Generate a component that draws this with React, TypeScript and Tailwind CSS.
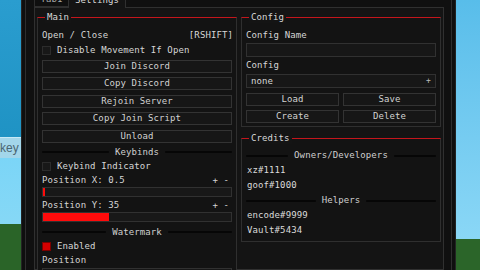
import React from "react";

const RED = "bg-[#c4161c]";

function GroupBox({
  title,
  className,
  children,
}: {
  title: string;
  className?: string;
  children: React.ReactNode;
}) {
  return (
    <div
      className={`relative border border-[#2f2f2f] border-t-[#c4161c] bg-[#131313] px-[4px] ${className ?? ""}`}
    >
      <div className="absolute -top-[7px] left-[7px] bg-[#141414] px-[2px] leading-[12px] text-[#d8d8d8]">
        {title}
      </div>
      {children}
    </div>
  );
}

function Btn({ label, className }: { label: string; className?: string }) {
  return (
    <div
      className={`flex h-[13px] items-center justify-center border border-[#333] bg-[#161616] leading-[11px] text-[#d2d2d2] ${className ?? ""}`}
    >
      {label}
    </div>
  );
}

function Divider({ label, className }: { label: string; className?: string }) {
  return (
    <div className={`flex items-center gap-[6px] ${className ?? ""}`}>
      <div className="h-[2px] flex-1 rounded-full bg-[#060606]" />
      <span className="text-[#cfcfcf]">{label}</span>
      <div className="h-[2px] flex-1 rounded-full bg-[#060606]" />
    </div>
  );
}

function Check({ label, on, className }: { label: string; on?: boolean; className?: string }) {
  return (
    <div className={`flex h-[12px] items-center gap-[6px] ${className ?? ""}`}>
      <div
        className={`h-[9px] w-[9px] border ${on ? "border-[#7a0000] bg-[#d40000]" : "border-[#2c2c2c] bg-[#181818]"}`}
      />
      <span>{label}</span>
    </div>
  );
}

function Slider({ value, max, className }: { value: number; max: number; className?: string }) {
  return (
    <div className={`h-[10px] border border-[#313131] bg-[#181818] ${className ?? ""}`}>
      <div className={`h-full ${value > 0 ? "bg-[#ff0b0b]" : ""}`} style={{ width: `${Math.max(1, (value / max) * 100)}%` }} />
    </div>
  );
}

export default function App() {
  return (
    <div className="relative h-[270px] w-[480px] overflow-hidden bg-[#6fcdf2] font-['DejaVu_Sans_Mono',monospace] text-[9px] tracking-[0.1px] text-[#d6d6d6]">
      {/* game backdrop */}
      <div className="absolute left-0 top-0 h-[137px] w-[22px] bg-gradient-to-b from-[#2a9dcf] to-[#1f93c4]" />
      <div className="absolute left-0 top-[137px] flex h-[21px] w-[22px] items-center border-t border-[#c6e9f6] bg-[#a3d6ea] pl-[0px] font-['Liberation_Sans',sans-serif] text-[12px] text-[#4b6672]">
        key
      </div>
      <div className="absolute left-0 top-[158px] h-[66px] w-[22px] bg-gradient-to-b from-[#7bd5f7] to-[#86d8f6]" />
      <div className="absolute left-0 top-[224px] h-[46px] w-[22px] bg-[#2a6428]" />
      <div className="absolute right-0 top-0 h-[239px] w-[26px] bg-gradient-to-b from-[#58bdea] to-[#8ad7f6]" />
      <div className="absolute right-0 top-[239px] h-[31px] w-[26px] bg-[#2b6529]" />

      {/* window */}
      <div className="absolute left-[21px] top-0 h-[270px] w-[435px] border-x border-[#242424] bg-[#0f0f0f] px-[3px]">
        <div className="flex h-full flex-col border-x border-[#2e2e2e] bg-[#101010] pl-[8px] pr-[7px]">
          <div className="-mt-[8px] flex h-[15px] shrink-0 items-stretch">
            <div className="flex w-[35px] items-center justify-center border border-[#2e2e2e] bg-[#0f0f0f] text-[#a8a8a8]">
              Tab1
            </div>
            <div className="relative top-[1px] z-10 -ml-px flex w-[58px] items-center justify-center border border-b-0 border-[#303030] bg-[#141414] text-[#dcdcdc]">
              Settings
            </div>
          </div>

          <div className="flex min-h-0 flex-1 gap-[4px] border border-[#303030] bg-[#141414] px-[2px] pt-[9px]">
            {/* Main */}
            <GroupBox title="Main" className="h-[300px] w-[200px] shrink-0 pt-[11px]">
              <div className="flex flex-col leading-[12px]">
                <div className="flex h-[12px] items-center justify-between">
                  <span>Open / Close</span>
                  <span className="mr-[-1px]">[RSHIFT]</span>
                </div>
                <Check label="Disable Movement If Open" className="mt-[3px]" />
                <Btn label="Join Discord" className="mt-[4px]" />
                <Btn label="Copy Discord" className="mt-[4px]" />
                <Btn label="Rejoin Server" className="mt-[5px]" />
                <Btn label="Copy Join Script" className="mt-[4px]" />
                <Btn label="Unload" className="mt-[5px]" />
                <Divider label="Keybinds" className="mt-[3px] h-[12px]" />
                <Check label="Keybind Indicator" className="mt-[2px]" />
                <div className="mt-[2px] flex h-[12px] items-center justify-between">
                  <span>Position X: 0.5</span>
                  <span className="mr-[3px]">+ -</span>
                </div>
                <Slider value={0.5} max={100} className="mt-[1px]" />
                <div className="mt-[2px] flex h-[12px] items-center justify-between">
                  <span>Position Y: 35</span>
                  <span className="mr-[3px]">+ -</span>
                </div>
                <Slider value={35} max={100} className="mt-[1px]" />
                <Divider label="Watermark" className="mt-[4px] h-[12px]" />
                <Check label="Enabled" on className="mt-[2px]" />
                <div className="mt-[2px] flex h-[12px] items-center">Position</div>
                <div className="mt-[2px] h-[14px] border border-[#313131] bg-[#171717]" />
              </div>
            </GroupBox>

            {/* right column */}
            <div className="flex w-[200px] shrink-0 flex-col">
              <GroupBox title="Config" className="pb-[3px] pt-[11px]">
                <div className="flex flex-col leading-[12px]">
                  <div className="flex h-[12px] items-center">Config Name</div>
                  <div className="mt-[2px] h-[14px] border border-[#313131] bg-[#171717]" />
                  <div className="mt-[2px] flex h-[12px] items-center">Config</div>
                  <div className="mt-[3px] flex h-[14px] items-center justify-between border border-[#313131] bg-[#171717] pl-[4px] pr-[4px]">
                    <span>none</span>
                    <span className="text-[8px] text-[#bdbdbd]">+</span>
                  </div>
                  <div className="mt-[5px] grid grid-cols-2 gap-[4px]">
                    <Btn label="Load" />
                    <Btn label="Save" />
                  </div>
                  <div className="mt-[4px] grid grid-cols-2 gap-[4px]">
                    <Btn label="Create" />
                    <Btn label="Delete" />
                  </div>
                </div>
              </GroupBox>

              <GroupBox title="Credits" className="mt-[11px] pb-[3px] pt-[9px]">
                <div className="flex flex-col leading-[15px] text-[#dadada]">
                  <Divider label="Owners/Developers" className="h-[15px]" />
                  <div className="h-[15px] pl-[1px]">xz#1111</div>
                  <div className="h-[15px] pl-[1px]">goof#1000</div>
                  <Divider label="Helpers" className="h-[15px]" />
                  <div className="h-[15px] pl-[1px]">encode#9999</div>
                  <div className="h-[15px] pl-[1px]">Vault#5434</div>
                </div>
              </GroupBox>
            </div>
          </div>
        </div>
      </div>
      <span className={`hidden ${RED}`} />
    </div>
  );
}
